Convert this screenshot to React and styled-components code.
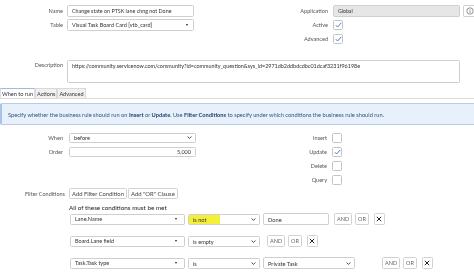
import React from "react";
import styled, { createGlobalStyle } from "styled-components";

const GlobalStyle = createGlobalStyle`
  html, body { margin: 0; padding: 0; background: #fff; width: 474px; height: 278px; overflow: hidden; }
  body { font-family: Lato, "Open Sans", "Liberation Sans", sans-serif; color: #333; font-size: 5.5px; }
`;

const Page = styled.div`
  padding-top: 4px;
  width: 474px;
`;

const Columns = styled.div`
  display: flex;
  margin-top: ${(p) => p.$mt || 0}px;
`;

const Col = styled.div`
  display: flex;
  flex-direction: column;
  gap: 1px;
  width: ${(p) => (p.$w ? `${p.$w}px` : "auto")};
  flex-shrink: 0;
`;

const Row = styled.div`
  display: flex;
  align-items: ${(p) => (p.$top ? "flex-start" : "center")};
  height: ${(p) => (p.$h ? `${p.$h}px` : "13px")};
  margin-top: ${(p) => p.$mt || 0}px;
`;

const Label = styled.div`
  width: ${(p) => p.$w}px;
  margin-right: ${(p) => p.$gap}px;
  flex-shrink: 0;
  text-align: right;
  color: #555;
  font-size: ${(p) => p.$fs || 5.55}px;
  white-space: nowrap;
  padding-top: ${(p) => p.$pt || 0}px;
`;

const Field = styled.div`
  position: relative;
  box-sizing: border-box;
  width: ${(p) => p.$w}px;
  height: ${(p) => p.$h || 12}px;
  border: 1px solid #cfcfcf;
  border-radius: 1.5px;
  background: ${(p) => p.$bg || "#fff"};
  display: flex;
  align-items: ${(p) => (p.$top ? "flex-start" : "center")};
  justify-content: ${(p) => (p.$right ? "flex-end" : "flex-start")};
  padding: ${(p) => (p.$top ? "2px 4px" : "0 4px")};
  color: #333;
  font-size: ${(p) => p.$fs || 5.5}px;
  white-space: nowrap;
  overflow: hidden;
  flex-shrink: 0;
  margin-left: ${(p) => p.$ml || 0}px;
`;

const Tri = styled.span`
  position: absolute;
  right: ${(p) => p.$r || 6}px;
  top: 50%;
  margin-top: -1px;
  width: 0;
  height: 0;
  border-left: 1.6px solid transparent;
  border-right: 1.6px solid transparent;
  border-top: 2.2px solid #222;
`;

const ChevronBox = styled.svg`
  position: absolute;
  right: ${(p) => p.$r || 4}px;
  top: 50%;
  margin-top: -1.5px;
`;

const Chevron = ({ r }) => (
  <ChevronBox $r={r} width="5" height="3" viewBox="0 0 5 3">
    <polyline points="0.6,0.5 2.5,2.4 4.4,0.5" fill="none" stroke="#333" strokeWidth="0.9" />
  </ChevronBox>
);

const CheckBox = styled.div`
  box-sizing: border-box;
  width: 10px;
  height: 10px;
  border: 1px solid #c4c4c4;
  border-radius: 1.5px;
  background: #fff;
  display: flex;
  align-items: center;
  justify-content: center;
`;

const Check = () => (
  <svg width="7" height="6" viewBox="0 0 7 6">
    <polyline points="0.8,3.2 2.6,5 6.3,0.8" fill="none" stroke="#3f6fb6" strokeWidth="0.9" />
  </svg>
);

const IconBtn = styled.div`
  box-sizing: border-box;
  width: 14px;
  height: 12px;
  margin-left: 3px;
  border: 1px solid #d0d0d0;
  border-radius: 1.5px;
  display: flex;
  align-items: center;
  padding-left: 2px;
  background: #fff;
`;

const Tabs = styled.div`
  display: flex;
  margin-top: 5px;
  height: 10px;
  border-bottom: 1px solid #e3d9d9;
`;

const Tab = styled.div`
  box-sizing: border-box;
  height: 10px;
  padding: 0 1px;
  display: flex;
  align-items: center;
  font-size: 5.55px;
  color: #333;
  background: ${(p) => (p.$active ? "#fff" : "#f1f1f1")};
  border: 1px solid ${(p) => (p.$active ? "#d5e2f0" : "#d8d8d8")};
  border-top: 1px solid ${(p) => (p.$active ? "#9fbbe0" : "#d8d8d8")};
  border-bottom: none;
`;

const Info = styled.div`
  box-sizing: border-box;
  margin-top: 4px;
  height: 22px;
  width: 480px;
  background: #e8f1fb;
  border: 1px solid #b6cde8;
  border-left: 2px solid #a9c3e6;
  border-radius: 2px;
  display: flex;
  align-items: center;
  padding-left: 6px;
  color: #31527d;
  font-size: 5.7px;
  white-space: nowrap;
  b { color: #1f3f6c; font-weight: 700; }
`;

const Btn = styled.div`
  box-sizing: border-box;
  height: ${(p) => p.$h || 11}px;
  padding: 0 ${(p) => p.$px ?? 2}px;
  border: 1px solid #d2d2d2;
  border-radius: 1.5px;
  background: #fff;
  display: flex;
  align-items: center;
  justify-content: center;
  color: ${(p) => p.$color || "#666"};
  font-size: ${(p) => p.$fs || 5.5}px;
  white-space: nowrap;
  margin-left: ${(p) => p.$ml || 0}px;
  flex-shrink: 0;
`;

const XBtn = styled(Btn)`
  width: 11px;
  padding: 0;
`;

const MustBe = styled.div`
  margin-left: 69px;
  margin-top: 3px;
  height: 10px;
  display: flex;
  align-items: center;
  font-size: 6.3px;
  color: #222;
`;

const CondList = styled.div`
  display: flex;
  flex-direction: column;
  gap: 10px;
  margin-top: 1px;
  margin-left: 70px;
`;

const CondRow = styled.div`
  display: flex;
  align-items: center;
  height: 12px;
  gap: 3px;
`;

const Highlight = styled.span`
  position: absolute;
  left: 0;
  top: 0;
  width: 31px;
  height: 100%;
  background: #f4f03a;
  mix-blend-mode: multiply;
`;

const OpText = styled.span`
  position: relative;
`;

const XIcon = () => (
  <svg width="6" height="6" viewBox="0 0 6 6">
    <path d="M0.8 0.8 L5.2 5.2 M5.2 0.8 L0.8 5.2" stroke="#222" strokeWidth="1" />
  </svg>
);

const Condition = ({ field, op, value, valueKind, btnMl, hl }) => (
  <CondRow>
    <Field $w={115} $h={11} $fs={5.5}>
      {field}
      <Tri $r={7} />
    </Field>
    <Field $w={72} $h={11} $fs={5.6}>
      {hl && <Highlight />}
      <OpText>{op}</OpText>
      <Chevron r={3} />
    </Field>
    {valueKind === "input" && <Field $w={66} $h={12} $fs={5.7}>{value}</Field>}
    {valueKind === "select" && (
      <Field $w={92} $h={12} $fs={5.7}>
        {value}
        <Chevron r={3} />
      </Field>
    )}
    <Btn $ml={btnMl} $h={12}>AND</Btn>
    <Btn $h={12}>OR</Btn>
    <XBtn $ml={2} $h={12}>
      <XIcon />
    </XBtn>
  </CondRow>
);

export default function App() {
  return (
    <Page>
      <GlobalStyle />
      <Columns>
        <Col $w={264}>
          <Row>
            <Label $w={63} $gap={4}>Name</Label>
            <Field $w={127} $fs={5.35}>Change state on PTSK lane chng not Done</Field>
          </Row>
          <Row>
            <Label $w={63} $gap={4}>Table</Label>
            <Field $w={127} $fs={5.5}>
              Visual Task Board Card [vtb_card]
              <Tri $r={5} />
            </Field>
          </Row>
        </Col>
        <Col>
          <Row>
            <Label $w={64} $gap={5}>Application</Label>
            <Field $w={127} $bg="#e6e6e6" $fs={5.2}>Global</Field>
            <IconBtn>
              <svg width="8" height="8" viewBox="0 0 8 8">
                <circle cx="4" cy="4" r="3.2" fill="none" stroke="#777" strokeWidth="0.8" />
                <path d="M4 3.4 V6 M4 2 V2.6" stroke="#777" strokeWidth="0.8" />
              </svg>
            </IconBtn>
          </Row>
          <Row>
            <Label $w={64} $gap={5}>Active</Label>
            <CheckBox><Check /></CheckBox>
          </Row>
          <Row>
            <Label $w={64} $gap={5}>Advanced</Label>
            <CheckBox><Check /></CheckBox>
          </Row>
        </Col>
      </Columns>

      <Row $top $h={23} $mt={15}>
        <Label $w={63} $gap={4} $pt={2}>Description</Label>
        <Field $w={393} $h={23} $top $fs={5.45}>
          https://community.servicenow.com/community?id=community_question&amp;sys_id=2971db2ddbdcdbc01dcaf3231f96198e
        </Field>
      </Row>

      <Tabs>
        <Tab $active>When to run</Tab>
        <Tab>Actions</Tab>
        <Tab>Advanced</Tab>
      </Tabs>

      <Info>
        <span>
          Specify whether the business rule should run on <b>Insert</b> or <b>Update</b>. Use{" "}
          <b>Filter Conditions</b> to specify under which conditions the business rule should run.
        </span>
      </Info>

      <Columns $mt={6}>
        <Col $w={264}>
          <Row>
            <Label $w={63} $gap={6}>When</Label>
            <Field $w={127} $h={10} $fs={5.6}>
              before
              <Chevron r={3} />
            </Field>
          </Row>
          <Row>
            <Label $w={63} $gap={6}>Order</Label>
            <Field $w={127} $h={10} $right $fs={5.5}>5,000</Field>
          </Row>
        </Col>
        <Col>
          <Row>
            <Label $w={63} $gap={5}>Insert</Label>
            <CheckBox />
          </Row>
          <Row>
            <Label $w={63} $gap={5}>Update</Label>
            <CheckBox><Check /></CheckBox>
          </Row>
          <Row>
            <Label $w={63} $gap={5}>Delete</Label>
            <CheckBox />
          </Row>
          <Row>
            <Label $w={63} $gap={5}>Query</Label>
            <CheckBox />
          </Row>
        </Col>
      </Columns>

      <Row $h={11} $mt={2}>
        <Label $w={65} $gap={4} $fs={5.5}>Filter Conditions</Label>
        <Btn $color="#444" $px={2} $fs={5.85}>Add Filter Condition</Btn>
        <Btn $color="#444" $px={2} $ml={1} $fs={5.95}>Add "OR" Clause</Btn>
      </Row>

      <MustBe>All of these conditions must be met</MustBe>

      <CondList>
        <Condition field="Lane.Name" op="is not" value="Done" valueKind="input" btnMl={2} hl />
        <Condition field="Board.Lane field" op="is empty" valueKind="none" btnMl={4} />
        <Condition field="Task.Task type" op="is" value="Private Task" valueKind="select" btnMl={24} />
      </CondList>
    </Page>
  );
}
